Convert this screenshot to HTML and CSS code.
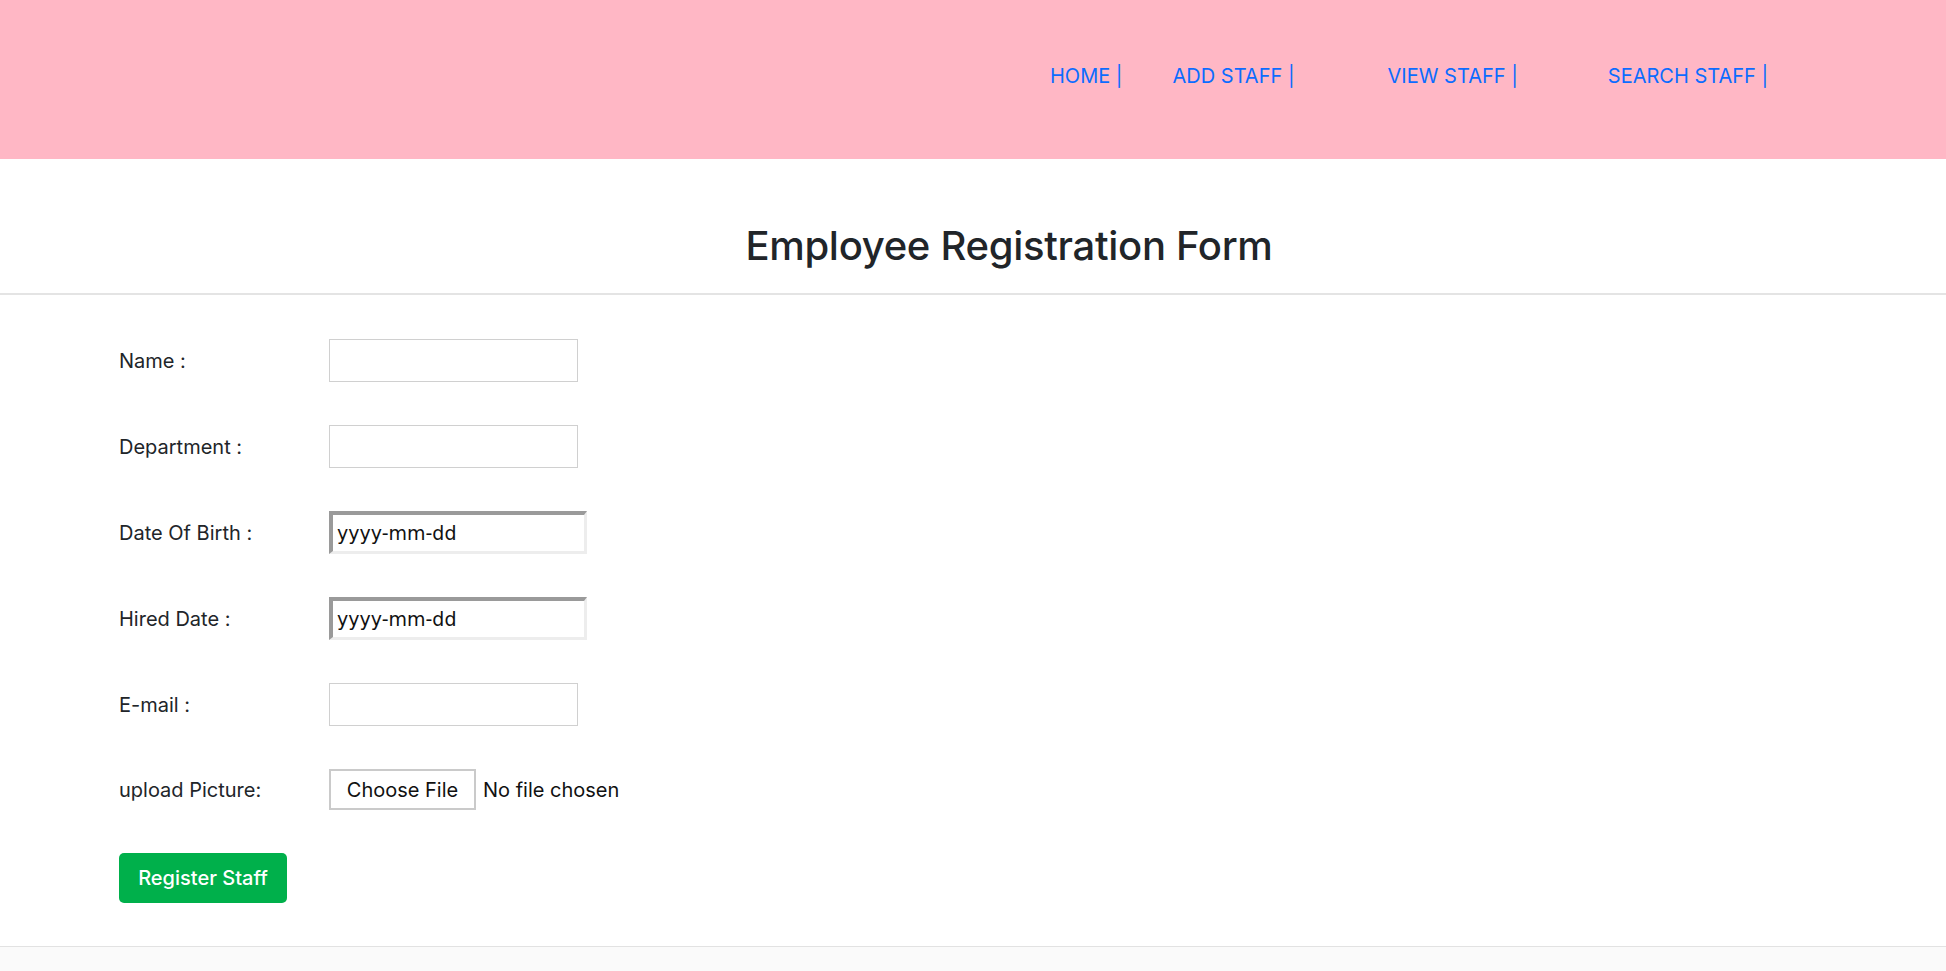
FILE: index.html
```html
<!DOCTYPE html>
<html lang="en">
<head>
<meta charset="utf-8">
<title>Employee Registration Form</title>
<link rel="stylesheet" href="styles.css">
</head>
<body>
<header class="topbar">
  <nav class="nav">
    <a href="#" class="nav-link nav-home">HOME |</a>
    <a href="#" class="nav-link nav-add">ADD STAFF |</a>
    <a href="#" class="nav-link nav-view">VIEW STAFF |</a>
    <a href="#" class="nav-link">SEARCH STAFF |</a>
  </nav>
</header>

<section class="title-section">
  <h2 class="title">Employee Registration Form</h2>
</section>

<form class="reg-form">
  <div class="row">
    <label class="lbl">Name :</label>
    <input type="text" class="txt">
  </div>
  <div class="row">
    <label class="lbl">Department :</label>
    <input type="text" class="txt">
  </div>
  <div class="row">
    <label class="lbl">Date Of Birth :</label>
    <input type="text" class="date" value="yyyy-mm-dd">
  </div>
  <div class="row">
    <label class="lbl">Hired Date :</label>
    <input type="text" class="date" value="yyyy-mm-dd">
  </div>
  <div class="row">
    <label class="lbl">E-mail :</label>
    <input type="text" class="txt">
  </div>
  <div class="row file-row">
    <label class="lbl">upload Picture:</label>
    <span class="file-btn">Choose File</span>
    <span class="file-name">No file chosen</span>
  </div>
  <div class="submit-row">
    <button type="button" class="btn-submit">Register Staff</button>
  </div>
</form>

<footer class="foot"></footer>
</body>
</html>
```

FILE: styles.css
```css
html, body {
  margin: 0;
  padding: 0;
  background: #ffffff;
}

body {
  font-family: Inter, "Liberation Sans", Arial, sans-serif;
  font-size: 20px;
  color: #212529;
}

.topbar {
  height: 159px;
  background: #ffb7c5;
  display: flex;
  align-items: center;
  box-sizing: border-box;
  padding-left: 1050px;
  padding-bottom: 8px;
}

.nav {
  display: flex;
  align-items: center;
}

.nav-link {
  color: #0b6cff;
  text-decoration: none;
  font-size: 20px;
  line-height: 24px;
  white-space: nowrap;
}

.nav-home { margin-right: 50px; }
.nav-add { margin-right: 93px; }
.nav-view { margin-right: 90px; }

.title-section {
  margin-top: 63px;
  padding-bottom: 23px;
  border-bottom: 2px solid #e4e4e4;
  display: flex;
  justify-content: center;
  padding-left: 72px;
}

.title {
  margin: 0;
  font-size: 40px;
  line-height: 48px;
  font-weight: 500;
  color: #212529;
  letter-spacing: -0.3px;
}

.reg-form {
  padding: 44px 0 43px 119px;
  display: flex;
  flex-direction: column;
  gap: 43px;
  border-bottom: 1px solid #e2e2e2;
}

.row {
  display: flex;
  align-items: center;
  height: 43px;
}

.lbl {
  width: 210px;
  flex: none;
  font-size: 20px;
  color: #212529;
}

.txt {
  box-sizing: border-box;
  width: 249px;
  height: 43px;
  margin: 0;
  border: 1.5px solid #d0d0d0;
  background: #fff;
  padding: 0 6px;
  font-size: 20px;
  outline: none;
}

.date {
  box-sizing: border-box;
  width: 258px;
  height: 43px;
  margin: 0;
  padding: 0 0 0 4px;
  border-style: solid;
  border-width: 4px 3px 3px 4px;
  border-color: #9a9a9a #ededed #ededed #9a9a9a;
  background: #fff;
  font-family: "DejaVu Sans", sans-serif;
  font-size: 19px;
  color: #111;
  outline: none;
}

.file-row {
  height: 41px;
}

.file-btn {
  box-sizing: border-box;
  height: 41px;
  width: 147px;
  display: flex;
  align-items: center;
  justify-content: center;
  border: 2px solid #cacaca;
  background: #fff;
  color: #111;
  font-size: 20px;
}

.file-name {
  margin-left: 7px;
  font-size: 20px;
  color: #111;
}

.submit-row {
  display: flex;
}

.btn-submit {
  width: 168px;
  height: 50px;
  border: none;
  border-radius: 5px;
  background: #00b04b;
  color: #fff;
  font-family: Inter, "Liberation Sans", Arial, sans-serif;
  font-size: 20px;
  font-weight: 500;
  padding: 0;
  cursor: pointer;
}

.foot {
  height: 40px;
  background: #fafafa;
}
```
